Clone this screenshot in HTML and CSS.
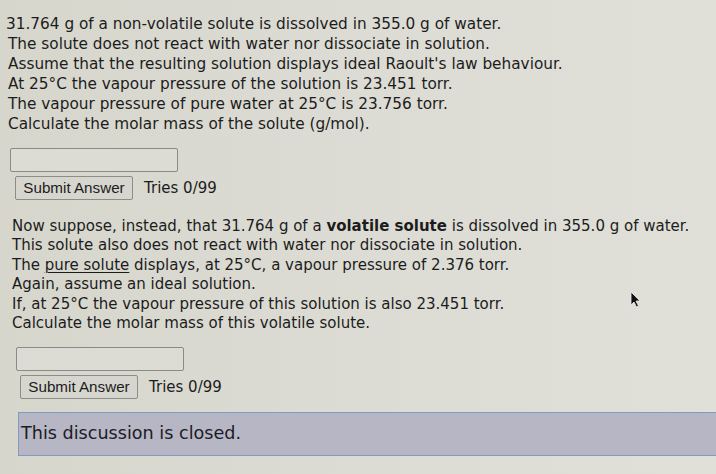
FILE: index.html
```html
<!DOCTYPE html>
<html>
<head>
<meta charset="utf-8">
<link rel="stylesheet" href="styles.css">
</head>
<body>
<div class="page">
  <div class="q q1">
    <div>31.764 g of a non-volatile solute is dissolved in 355.0 g of water.</div>
    <div class="in">The solute does not react with water nor dissociate in solution.</div>
    <div class="in">Assume that the resulting solution displays ideal Raoult's law behaviour.</div>
    <div class="in">At 25°C the vapour pressure of the solution is 23.451 torr.</div>
    <div class="in">The vapour pressure of pure water at 25°C is 23.756 torr.</div>
    <div class="in">Calculate the molar mass of the solute (g/mol).</div>
  </div>
  <div class="answer a1">
    <div class="box"></div>
    <div class="row">
      <span class="btn">Submit Answer</span>
      <span class="tries">Tries 0/99</span>
    </div>
  </div>
  <div class="q q2">
    <div>Now suppose, instead, that 31.764 g of a <b>volatile solute</b> is dissolved in 355.0 g of water.</div>
    <div>This solute also does not react with water nor dissociate in solution.</div>
    <div>The <u>pure solute</u> displays, at 25°C, a vapour pressure of 2.376 torr.</div>
    <div>Again, assume an ideal solution.</div>
    <div>If, at 25°C the vapour pressure of this solution is also 23.451 torr.</div>
    <div>Calculate the molar mass of this volatile solute.</div>
  </div>
  <div class="answer a2">
    <div class="box"></div>
    <div class="row">
      <span class="btn">Submit Answer</span>
      <span class="tries">Tries 0/99</span>
    </div>
  </div>
  <div class="closed">This discussion is closed.</div>
  <svg class="cursor" width="12" height="18" viewBox="0 0 12 18"><path d="M1 1 L1 14 L4 11 L6.5 16 L8.5 15 L6 10 L10 10 Z" fill="#111" stroke="#eee" stroke-width="0.8"/></svg>
</div>
</body>
</html>
```
FILE: styles.css
```css
html, body {
  margin: 0;
  padding: 0;
}
body {
  background: linear-gradient(90deg, #d6d6cd 0%, #dcdcd4 50%, #e0e0d9 100%);
  color: #1c1c1c;
  font-family: "DejaVu Sans", Verdana, sans-serif;
  width: 716px;
  height: 474px;
  overflow: hidden;
}
.page {
  position: relative;
  padding-top: 14px;
}
.q1 {
  font-size: 15.3px;
  line-height: 20px;
  padding-left: 6px;
}
.q1 .in {
  padding-left: 2px;
}
.answer {
  display: flex;
  flex-direction: column;
}
.a1 {
  padding: 14px 0 0 10px;
}
.box {
  width: 166px;
  height: 22px;
  border: 1px solid #8a8a86;
  border-radius: 2px;
  background: #dcdcd4;
}
.row {
  display: flex;
  align-items: center;
  margin-top: 4px;
  margin-left: 5px;
}
.btn {
  font-family: "Liberation Sans", Arial, sans-serif;
  font-size: 15.2px;
  border: 1px solid #8c8c88;
  border-radius: 2px;
  background: #d6d6cf;
  height: 24px;
  line-height: 22px;
  box-sizing: border-box;
  width: 118px;
  text-align: center;
}
.tries {
  font-size: 15px;
  margin-left: 11px;
}
.q2 {
  font-size: 15px;
  line-height: 19.4px;
  padding: 17px 0 0 12px;
}
.q2 u {
  text-decoration-thickness: 1px;
  text-underline-offset: 2px;
}
.a2 {
  padding: 14px 0 0 16px;
}
.a2 .row {
  margin-left: 4px;
}
.closed {
  margin: 13px 0 0 18px;
  height: 44px;
  line-height: 40px;
  background: #b6b6c5;
  border: 1px solid #7f9cc0;
  border-right: none;
  font-size: 17.6px;
  padding-left: 2px;
  color: #1c1c24;
  box-sizing: border-box;
}
.cursor {
  position: absolute;
  left: 630px;
  top: 291px;
}
```
